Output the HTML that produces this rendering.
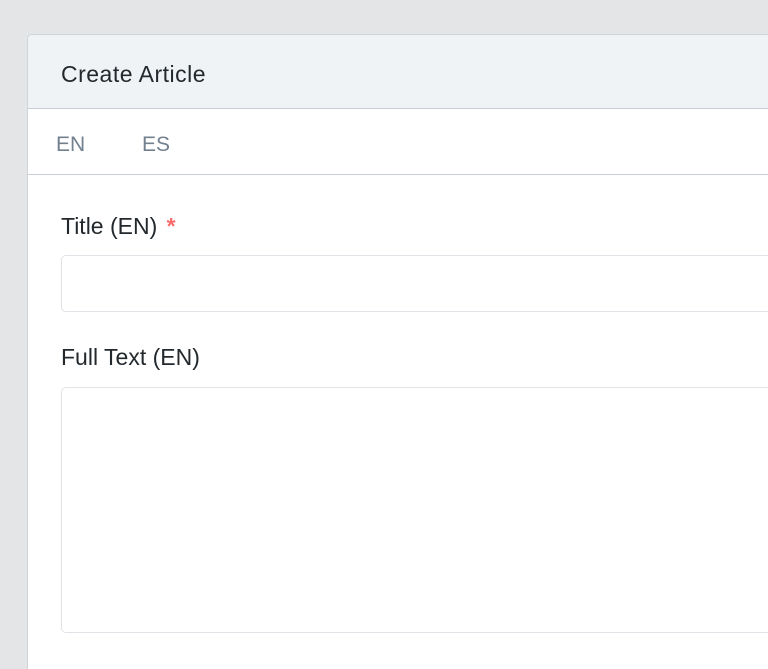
<!DOCTYPE html>
<html><head><style>
html,body{margin:0;padding:0;width:768px;height:669px;overflow:hidden;}
body{background:#e4e5e7;font-family:"Liberation Sans",sans-serif;position:relative;}
.card{position:absolute;left:27px;top:34px;width:760px;height:660px;background:#fff;border:1px solid #cfd4d9;border-radius:5px;overflow:hidden;}
.hdr{height:74px;background:#f0f3f5;border-bottom:1px solid #c8ced3;box-sizing:border-box;}
.hdr span{position:absolute;left:33px;top:27px;font-size:23px;line-height:24px;color:#23282c;letter-spacing:0.5px;}
.tabs{position:absolute;top:74px;left:0;right:0;height:65px;border-bottom:1px solid #c8ced3;}
.tabs span{position:absolute;top:25px;font-size:21px;line-height:22px;color:#73818f;}
.lbl{position:absolute;left:33px;font-size:23px;line-height:23px;color:#23282c;}
.lbl b{color:#f86c6b;font-weight:bold;margin-left:3px;}
.inp{position:absolute;left:33px;width:740px;border:1px solid #dfe3e7;border-radius:5px;box-sizing:border-box;}
</style></head><body>
<div class="card">
<div class="hdr"><span>Create Article</span></div>
<div class="tabs"><span style="left:28px">EN</span><span style="left:114px">ES</span></div>
<div class="lbl" style="top:180px">Title (EN) <b>*</b></div>
<div class="inp" style="top:220px;height:57px"></div>
<div class="lbl" style="top:311px">Full Text (EN)</div>
<div class="inp" style="top:352px;height:246px"></div>
</div>
</body></html>
